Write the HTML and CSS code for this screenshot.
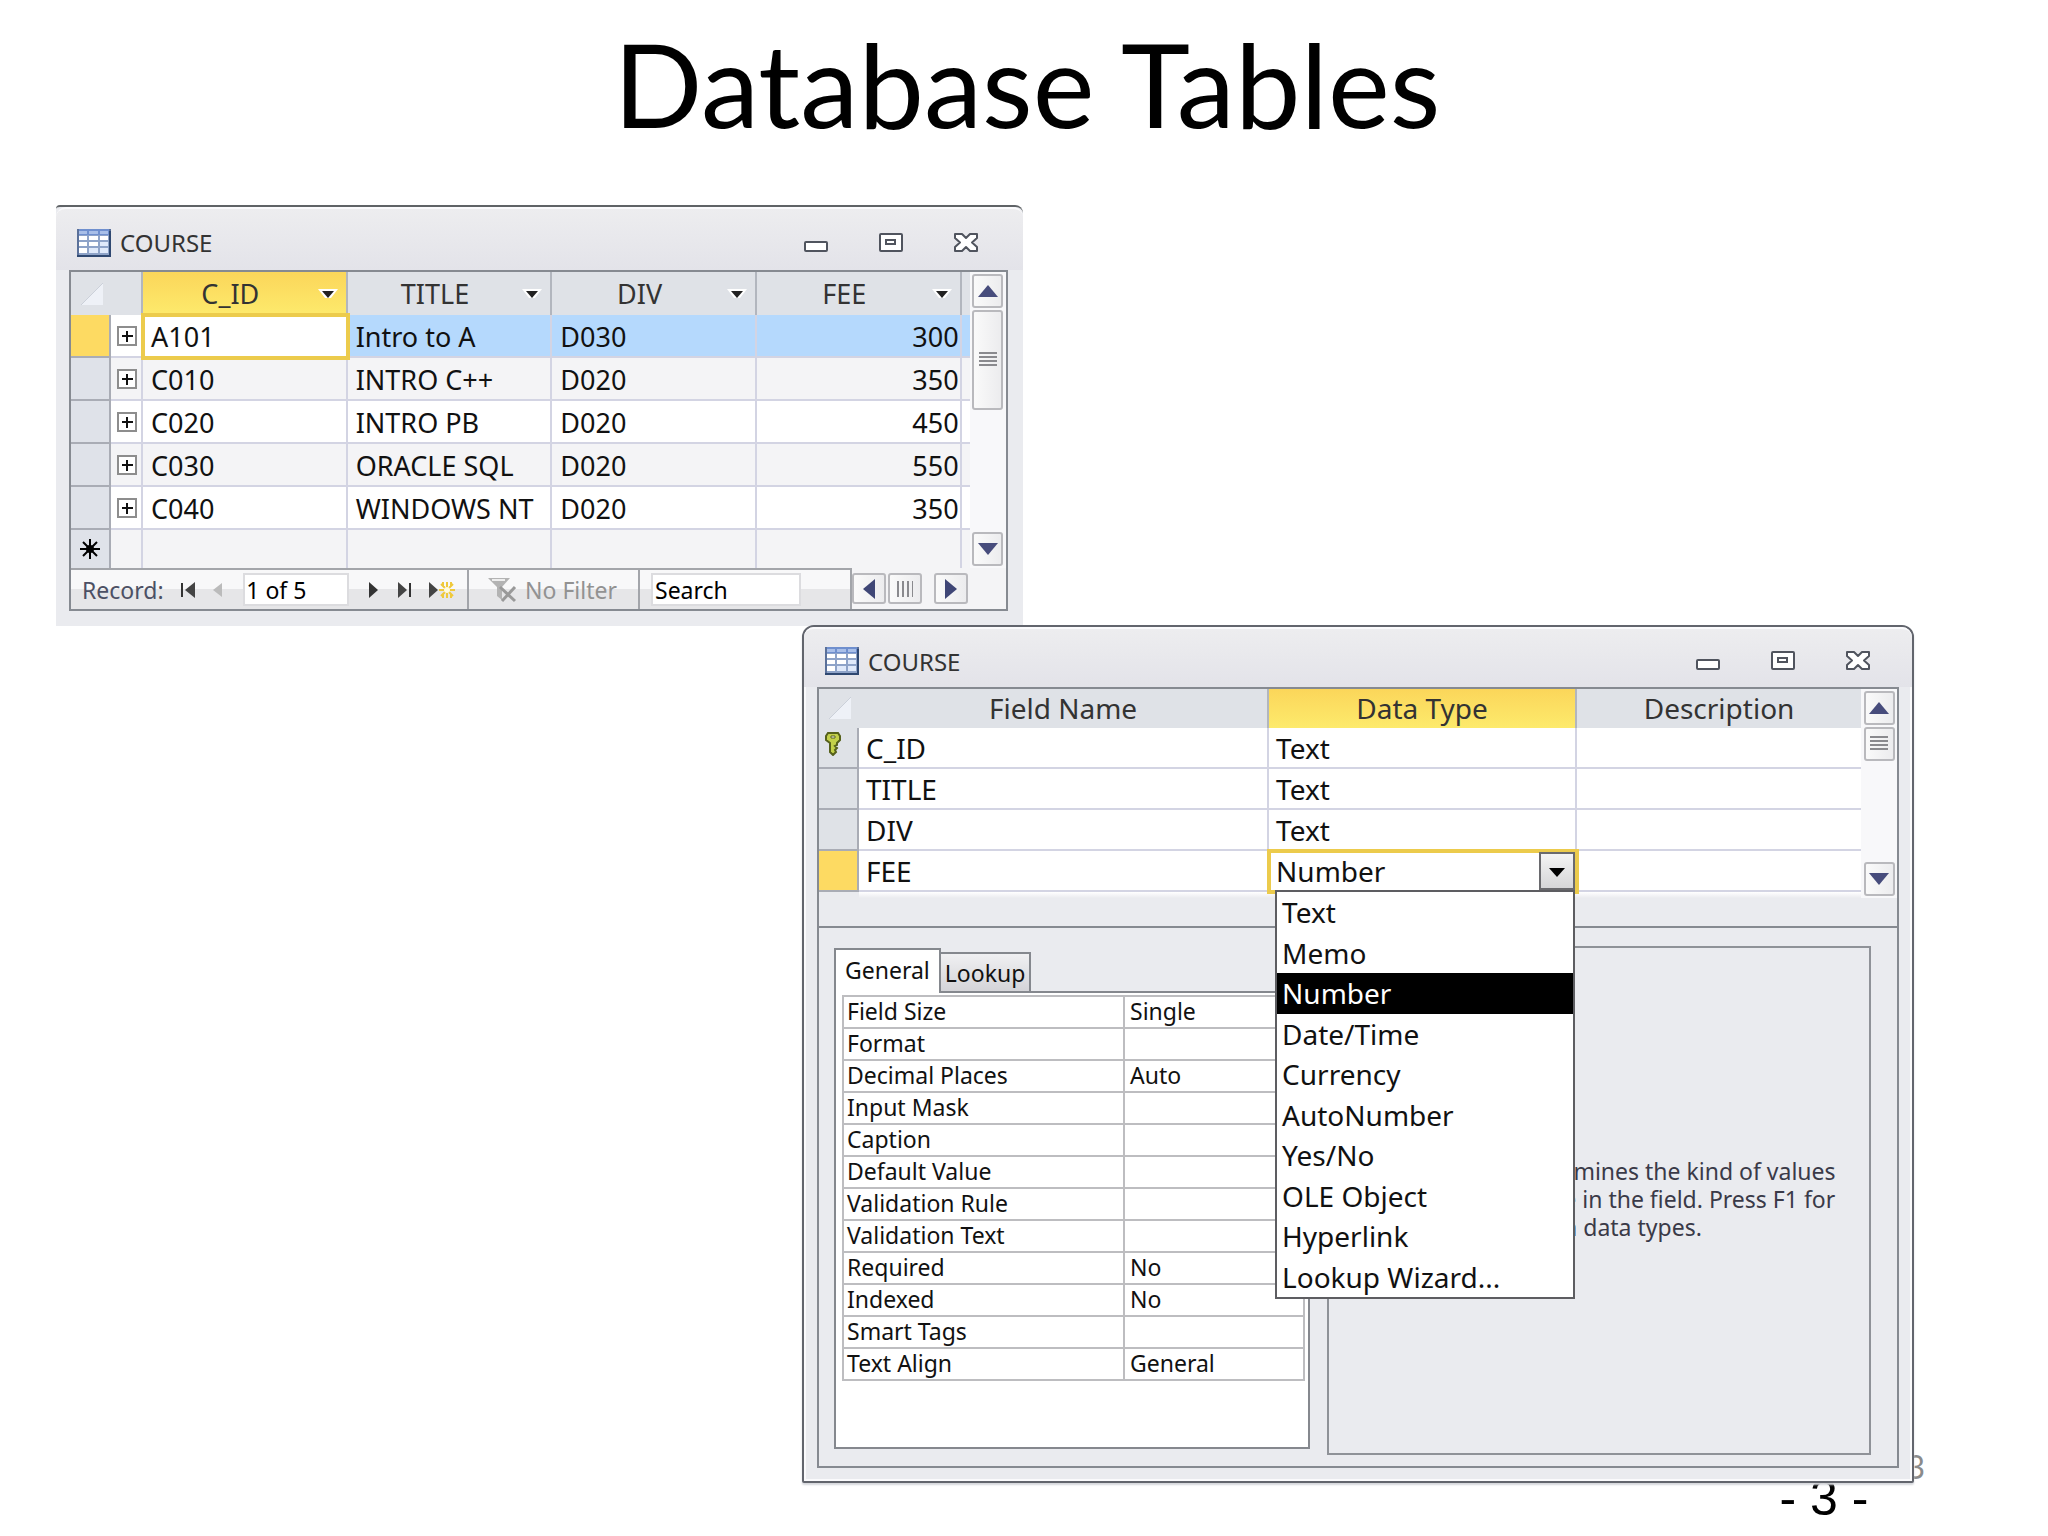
FILE: index.html
```html
<!DOCTYPE html>
<html lang="en">
<head>
  <meta charset="UTF-8">
  <title>Database Tables</title>
  <link rel="stylesheet" href="styles.css">
</head>
<body>

<!-- shared icons -->
<svg class="sprite" aria-hidden="true">
  <symbol id="icon-table" viewBox="0 0 34 28">
    <rect width="34" height="28" fill="#8ea3c8"/>
    <rect width="34" height="6" fill="#6f8fce"/>
    <path d="M2 2h8v3H2zM12 2h9v3h-9zM23 2h8v3h-8z" fill="#a9bfe8"/>
    <path d="M2 7h8v4H2zM12 7h9v4h-9zM23 7h8v4h-8zM2 13h8v4H2zM12 13h9v4h-9zM2 19h8v5H2z" fill="#fff"/>
    <path d="M23 13h8v4h-8zM12 19h9v5h-9zM23 19h8v5h-8z" fill="#dfe9fa"/>
    <path d="M1 0v27h32V0" fill="none" stroke="#5a7099" stroke-width="2"/>
    <path d="M0 27h33V2" fill="none" stroke="#2f4871" stroke-width="2"/>
  </symbol>
  <symbol id="icon-min" viewBox="0 0 24 20">
    <rect x="1" y="9" width="22" height="9" rx="1" fill="#fff" stroke="#50545e" stroke-width="2"/>
  </symbol>
  <symbol id="icon-max" viewBox="0 0 24 20">
    <rect x="1" y="1" width="22" height="17" rx="1" fill="#fff" stroke="#50545e" stroke-width="2"/>
    <rect x="7" y="7" width="9" height="4" fill="#fff" stroke="#50545e" stroke-width="2"/>
  </symbol>
  <symbol id="icon-close" viewBox="0 0 24 20">
    <path d="M1 1h7l4 4 4-4h7v4l-5 4.500 5 4.500v4h-7l-4-4-4 4H1v-4l5-4.500L1 5z" fill="#fff" stroke="#50545e" stroke-width="2" stroke-linejoin="round"/>
  </symbol>
  <symbol id="icon-corner" viewBox="0 0 24 24">
    <path d="M23 1v22H1z" fill="#eef1f7"/>
    <path d="M23 1L1 23" stroke="#cbd0d9" stroke-width="1"/>
  </symbol>
  <symbol id="icon-drop" viewBox="0 0 20 12">
    <path d="M0 1h20l-7 9H7z" fill="#fff"/>
    <path d="M4 3h12l-6 7z" fill="#222"/>
  </symbol>
  <symbol id="icon-up" viewBox="0 0 20 12"><path d="M0 12L10 0l10 12z" fill="#474c7c"/></symbol>
  <symbol id="icon-down" viewBox="0 0 20 12"><path d="M0 0h20L10 12z" fill="#474c7c"/></symbol>
  <symbol id="icon-left" viewBox="0 0 12 20"><path d="M12 0v20L0 10z" fill="#3f4676"/></symbol>
  <symbol id="icon-right" viewBox="0 0 12 20"><path d="M0 0v20l12-10z" fill="#3f4676"/></symbol>
  <symbol id="icon-plus" viewBox="0 0 20 20">
    <rect x="1" y="1" width="18" height="18" fill="#fff" stroke="#8d8d8d" stroke-width="2"/>
    <path d="M5 10h11M10 5v11" stroke="#111" stroke-width="2"/>
  </symbol>
</svg>

<div class="slide">
  <h1>Database Tables</h1>

  <div class="desktop">

    <!-- DATASHEET VIEW -->
    <section class="window datasheet">
      <header class="titlebar">
        <svg class="table-icon"><use href="#icon-table"/></svg>
        <h2>COURSE</h2>
        <button aria-label="Minimize"><svg><use href="#icon-min"/></svg></button>
        <button aria-label="Restore"><svg><use href="#icon-max"/></svg></button>
        <button aria-label="Close"><svg><use href="#icon-close"/></svg></button>
      </header>

      <div class="frame">
        <div class="sheet">
          <table class="grid">
            <colgroup>
              <col class="col-selector"><col class="col-expand"><col><col><col><col><col class="col-tail">
            </colgroup>
            <thead>
              <tr>
                <th colspan="2" class="corner"><svg><use href="#icon-corner"/></svg></th>
                <th class="active"><div>C_ID<button aria-label="Sort C_ID"><svg><use href="#icon-drop"/></svg></button></div></th>
                <th><div>TITLE<button aria-label="Sort TITLE"><svg><use href="#icon-drop"/></svg></button></div></th>
                <th><div>DIV<button aria-label="Sort DIV"><svg><use href="#icon-drop"/></svg></button></div></th>
                <th><div>FEE<button aria-label="Sort FEE"><svg><use href="#icon-drop"/></svg></button></div></th>
                <th></th>
              </tr>
            </thead>
            <tbody>
              <tr class="current">
                <td class="selector"></td>
                <td class="expand"><button aria-label="Expand A101"><svg><use href="#icon-plus"/></svg></button></td>
                <td class="focus">A101</td><td>Intro to A</td><td>D030</td><td class="num">300</td><td></td>
              </tr>
              <tr>
                <td class="selector"></td>
                <td class="expand"><button aria-label="Expand C010"><svg><use href="#icon-plus"/></svg></button></td>
                <td>C010</td><td>INTRO C++</td><td>D020</td><td class="num">350</td><td></td>
              </tr>
              <tr>
                <td class="selector"></td>
                <td class="expand"><button aria-label="Expand C020"><svg><use href="#icon-plus"/></svg></button></td>
                <td>C020</td><td>INTRO PB</td><td>D020</td><td class="num">450</td><td></td>
              </tr>
              <tr>
                <td class="selector"></td>
                <td class="expand"><button aria-label="Expand C030"><svg><use href="#icon-plus"/></svg></button></td>
                <td>C030</td><td>ORACLE SQL</td><td>D020</td><td class="num">550</td><td></td>
              </tr>
              <tr>
                <td class="selector"></td>
                <td class="expand"><button aria-label="Expand C040"><svg><use href="#icon-plus"/></svg></button></td>
                <td>C040</td><td>WINDOWS NT</td><td>D020</td><td class="num">350</td><td></td>
              </tr>
              <tr class="new-row">
                <td class="selector">
                  <svg class="star" viewBox="0 0 20 20"><path d="M10 0v20M0 10h20M3 3l14 14M17 3L3 17" stroke="#000" stroke-width="2"/><circle cx="10" cy="10" r="4"/></svg>
                </td>
                <td></td><td></td><td></td><td></td><td></td><td></td>
              </tr>
            </tbody>
          </table>

          <div class="vscroll">
            <button aria-label="Scroll up"><svg class="arrow-v"><use href="#icon-up"/></svg></button>
            <div class="thumb"><span class="grip"></span></div>
            <button class="last" aria-label="Scroll down"><svg class="arrow-v"><use href="#icon-down"/></svg></button>
          </div>
        </div>

        <div class="navbar">
          <div class="nav-group records">
            <label for="record">Record:</label>
            <button aria-label="First record"><svg width="14" height="16"><path d="M1 1v14" stroke="#333" stroke-width="2"/><path d="M14 0v16L4 8z" fill="#444"/></svg></button>
            <button aria-label="Previous record"><svg width="14" height="16"><path d="M10 1v14L1 8z" fill="#bbb"/></svg></button>
            <input type="text" id="record" value="1 of 5">
            <button aria-label="Next record"><svg width="14" height="16"><path d="M2 0v16l9-8z" fill="#333"/></svg></button>
            <button aria-label="Last record"><svg width="14" height="16"><path d="M0 0v16l9-8z" fill="#444"/><path d="M12 1v14" stroke="#333" stroke-width="2"/></svg></button>
            <button aria-label="New record"><svg width="26" height="18"><path d="M0 1v16l9-8z" fill="#444"/><path d="M18 1v16M10 9h16M12 3l12 12M24 3L12 15M14 1v4M22 1v4M14 13v4M22 13v4" stroke="#efc93c" stroke-width="2"/><circle cx="18" cy="9" r="3" fill="#fffbe0"/></svg></button>
          </div>
          <button class="nav-group filter" disabled>
            <svg width="30" height="26"><path d="M1 1h22l-8 9v13l-5-4v-9z" fill="#b3b3b3"/><path d="M5 3h13" stroke="#eee" stroke-width="2"/><path d="M13 10l15 14M28 10L15 24" stroke="#999" stroke-width="3"/></svg>
            No Filter
          </button>
          <div class="nav-group search">
            <input type="text" aria-label="Search" value="Search">
          </div>
          <div class="hscroll">
            <button aria-label="Scroll left"><svg class="arrow-h"><use href="#icon-left"/></svg></button>
            <div class="thumb-h"><span class="grip-h"></span></div>
            <button class="last" aria-label="Scroll right"><svg class="arrow-h"><use href="#icon-right"/></svg></button>
          </div>
        </div>
      </div>
    </section>

    <!-- DESIGN VIEW -->
    <section class="window design">
      <header class="titlebar">
        <svg class="table-icon"><use href="#icon-table"/></svg>
        <h2>COURSE</h2>
        <button aria-label="Minimize"><svg><use href="#icon-min"/></svg></button>
        <button aria-label="Restore"><svg><use href="#icon-max"/></svg></button>
        <button aria-label="Close"><svg><use href="#icon-close"/></svg></button>
      </header>

      <div class="frame">
        <div class="fields">
          <div class="fields-main">
            <table class="grid">
              <colgroup>
                <col class="col-selector"><col><col class="col-type"><col class="col-desc">
              </colgroup>
              <thead>
                <tr>
                  <th class="corner"><svg><use href="#icon-corner"/></svg></th>
                  <th>Field Name</th><th class="active">Data Type</th><th>Description</th>
                </tr>
              </thead>
              <tbody>
                <tr>
                  <td class="selector key">
                    <svg width="16" height="24" viewBox="0 0 16 24"><path d="M3 1h10l2 3v4l-3 3v2l-2 1 2 2-2 2 1 2-3 3-3-3V11L1 8V4z" fill="#c3d04a" stroke="#56611c" stroke-width="2"/><path d="M6 4h4v2H6z" fill="#fff" stroke="#56611c"/></svg>
                  </td>
                  <td>C_ID</td><td>Text</td><td></td>
                </tr>
                <tr><td class="selector"></td><td>TITLE</td><td>Text</td><td></td></tr>
                <tr><td class="selector"></td><td>DIV</td><td>Text</td><td></td></tr>
                <tr class="current">
                  <td class="selector"></td><td>FEE</td>
                  <td class="focus combo">
                    <select aria-label="Data type of FEE">
                      <option>Text</option><option>Memo</option><option selected>Number</option><option>Date/Time</option><option>Currency</option>
                      <option>AutoNumber</option><option>Yes/No</option><option>OLE Object</option><option>Hyperlink</option><option>Lookup Wizard...</option>
                    </select>
                    <span class="combo-arrow"></span>
                    <ul class="menu" role="listbox" aria-label="Data types">
                      <li role="option">Text</li>
                      <li role="option">Memo</li>
                      <li role="option" aria-selected="true">Number</li>
                      <li role="option">Date/Time</li>
                      <li role="option">Currency</li>
                      <li role="option">AutoNumber</li>
                      <li role="option">Yes/No</li>
                      <li role="option">OLE Object</li>
                      <li role="option">Hyperlink</li>
                      <li role="option">Lookup Wizard...</li>
                    </ul>
                  </td>
                  <td></td>
                </tr>
              </tbody>
            </table>
            <div class="fade"></div>
          </div>
          <div class="vscroll">
            <button aria-label="Scroll up"><svg class="arrow-v"><use href="#icon-up"/></svg></button>
            <div class="thumb"><span class="grip"></span></div>
            <button class="last" aria-label="Scroll down"><svg class="arrow-v"><use href="#icon-down"/></svg></button>
          </div>
        </div>

        <div class="properties">
          <div class="tabs">
            <div class="tab-row" role="tablist">
              <button class="tab selected" role="tab" aria-selected="true">General</button>
              <button class="tab" role="tab">Lookup</button>
            </div>
            <div class="tab-panel">
              <table class="props">
                <tr><th>Field Size</th><td>Single</td></tr>
                <tr><th>Format</th><td></td></tr>
                <tr><th>Decimal Places</th><td>Auto</td></tr>
                <tr><th>Input Mask</th><td></td></tr>
                <tr><th>Caption</th><td></td></tr>
                <tr><th>Default Value</th><td></td></tr>
                <tr><th>Validation Rule</th><td></td></tr>
                <tr><th>Validation Text</th><td></td></tr>
                <tr><th>Required</th><td>No</td></tr>
                <tr><th>Indexed</th><td>No</td></tr>
                <tr><th>Smart Tags</th><td></td></tr>
                <tr><th>Text Align</th><td>General</td></tr>
              </table>
            </div>
          </div>
          <div class="help">
            <p>The data type determines the kind of values<br>that users can store in the field. Press F1 for<br>help on data types.</p>
          </div>
        </div>
      </div>
    </section>

  </div>

  <footer>
    <span class="page">- 3 -</span>
    <span class="number">3</span>
  </footer>
</div>

</body>
</html>
```
FILE: styles.css
```css
* {
  box-sizing: border-box;
}
body {
  margin: 0;
  background: #fff;
  color: #111;
  font-family: "Noto Sans", "Open Sans", sans-serif;
}
button, input, select {
  font: inherit;
  color: inherit;
  margin: 0;
  padding: 0;
  border: 0;
  border-radius: 0;
  background: none;
}
svg {
  display: block;
}
.sprite {
  position: absolute;
  width: 0;
  height: 0;
}
.slide {
  min-height: 100vh;
  display: flex;
  flex-direction: column;
}
h1 {
  margin: 0;
  height: 180px;
  padding-left: 6px;
  line-height: 166px;
  font-family: Lato, sans-serif;
  font-size: 117px;
  font-weight: 400;
  color: #000;
  text-align: center;
}
.desktop {
  position: relative;
  flex: 1;
}

/* windows */
.window {
  position: absolute;
  z-index: 1;
  background: #eaebef;
}
.datasheet {
  left: 56px;
  top: 25px;
  width: 47.2%;
  padding: 0 15px 15px 13px;
  border-top: 2px solid #5f6366;
  border-radius: 4px 8px 0 0;
  font-size: 27px;
}
.design {
  left: 802px;
  top: 445px;
  width: 54.3%;
  padding: 0 13px 13px;
  border: 2px solid #62656d;
  border-radius: 12px 12px 2px 2px;
  box-shadow: inset 0 0 0 2px #fafafc, 0 2px 2px #d5d7dc;
  font-size: 28px;
}
.titlebar {
  display: flex;
  align-items: center;
  gap: 51px;
  height: 60px;
  margin: 0 -13px;
  padding: 6px 42px 0 21px;
  border-radius: 10px 10px 0 0;
  border-top: 2px solid #fafafc;
  background: linear-gradient(#ededef, #e3e3e9);
}
.datasheet .titlebar {
  height: 63px;
  margin-right: -15px;
  padding-right: 45px;
}
.titlebar h2 {
  flex: 1;
  margin: 0 0 0 -42px;
  font-size: 24px;
  font-weight: 400;
  color: #333;
}
.table-icon {
  width: 34px;
  height: 28px;
}
.titlebar button svg {
  width: 24px;
  height: 20px;
}
.frame {
  border: 2px solid #868a91;
  background: #eaebef;
}

/* record and field grids */
.sheet, .fields {
  display: flex;
}
.grid {
  flex: 1;
  width: 100%;
  table-layout: fixed;
  border-collapse: separate;
  border-spacing: 0;
}
.grid th {
  height: 43px;
  padding: 0;
  font-weight: 400;
  line-height: 36px;
  color: #333;
  background: #dfe2e7;
  border-right: 2px solid #b2b6be;
}
.grid td {
  height: 43px;
  padding: 2px 0 0 8px;
  line-height: 36px;
  white-space: nowrap;
  background: #fff;
  border-right: 2px solid #d3d4e3;
  border-bottom: 2px solid #d3d4e3;
}
.grid th.active {
  background: linear-gradient(#fbd65a, #fdea6c);
}
.datasheet tbody tr:nth-child(even) td {
  background: #f4f4f6;
}
.grid td.selector {
  padding: 0;
  background: #dfe2e9;
  border-color: #a9acb5;
}
.datasheet tbody tr:nth-child(even) td.selector {
  background: #dfe2e9;
}
.grid .current td {
  background: #b5d9fd;
}
.grid .current td.selector {
  background: #fdda62;
}
.grid .current td.expand, .grid .current td.focus {
  background: #fff;
}
.grid td.focus {
  position: relative;
  outline: 4px solid #eccb4c;
  outline-offset: -2px;
}
.grid td.num {
  padding-right: 1px;
  text-align: right;
}
.grid td.expand {
  padding: 0 0 0 6px;
}
.expand svg {
  width: 20px;
  height: 20px;
}
.grid .new-row td {
  height: 38px;
  padding: 0;
  border-bottom: 0;
}
.star {
  width: 20px;
  height: 20px;
  margin: 0 auto;
}
.col-selector { width: 40px; }
.col-expand { width: 32px; }
.col-tail { width: 8px; }
.grid th:last-child, .grid td:last-child {
  border-right: 0;
}
th.corner svg {
  width: 24px;
  height: 24px;
  margin-left: 9px;
}
.grid th div {
  display: flex;
  align-items: center;
}
.grid th div button {
  margin-left: auto;
  margin-right: 8px;
}
.grid th div::before {
  content: "";
  margin-left: auto;
}
th div svg {
  width: 20px;
  height: 12px;
}

/* scroll bars */
.vscroll {
  display: flex;
  flex-direction: column;
  align-items: center;
  gap: 2px;
  width: 36px;
  padding: 2px 0;
  background: #f8f8fa;
}
.vscroll button, .thumb, .hscroll button, .thumb-h {
  display: flex;
  align-items: center;
  justify-content: center;
  width: 31px;
  height: 34px;
  border: 2px solid #b9b9bd;
  border-radius: 3px;
  background: linear-gradient(90deg, #fafafa, #ececee);
}
.datasheet .thumb {
  height: 100px;
}
.vscroll .last {
  margin-top: auto;
}
.arrow-v {
  width: 20px;
  height: 12px;
}
.arrow-h {
  width: 12px;
  height: 20px;
}
.grip {
  width: 18px;
  height: 16px;
  background: repeating-linear-gradient(#8a8a8e 0 2px, transparent 2px 4px);
}
.grip-h {
  width: 16px;
  height: 16px;
  background: repeating-linear-gradient(90deg, #8a8a8e 0 2px, transparent 2px 5px);
}

/* record navigation */
.navbar {
  display: flex;
  height: 41px;
  font-size: 23px;
  background: #f4f4f6;
}
.nav-group {
  display: flex;
  align-items: center;
  border-top: 2px solid #a3a5aa;
  border-right: 2px solid #a3a5aa;
  background: linear-gradient(#f8f8f9 50%, #e6e6e8 50%);
}
.navbar input {
  height: 33px;
  padding: 0 2px;
  background: #fff;
  border: 2px solid #dcdcdf;
  color: #000;
}
.records {
  width: 398px;
  padding: 0 12px 0 11px;
  justify-content: space-between;
}
.records label {
  color: #4c5064;
}
.records input {
  width: 106px;
  padding: 0 1px;
}
.filter {
  width: 171px;
  gap: 8px;
  padding-left: 18px;
  color: #929292;
}
.search {
  flex: 1;
  padding-left: 11px;
}
.search input {
  width: 150px;
}
.hscroll {
  display: flex;
  align-items: center;
  gap: 2px;
  width: 154px;
  padding: 0 38px 0 0;
}
.hscroll button, .thumb-h {
  width: 34px;
  height: 31px;
}
.hscroll .last {
  margin-left: auto;
}

/* design grid */
.fields {
  padding-bottom: 28px;
  border-bottom: 2px solid #868a91;
}
.fields-main {
  flex: 1;
}
.design .grid th {
  height: 39px;
  padding-bottom: 1px;
}
.design .grid td {
  height: 41px;
  padding: 0 0 0 7px;
}
.design .grid tbody td {
  background: #fff;
}
.design .grid td.selector {
  padding: 0;
  background: #dfe2e7;
}
.design .grid .current td.selector {
  background: #fdda62;
}
.design .grid th.corner {
  border-right: 0;
}
.design .key svg {
  margin: -8px 0 0 6px;
}
.col-type { width: 308px; }
.col-desc { width: 284px; }
.fade {
  height: 6px;
  margin-left: 40px;
  background: linear-gradient(#fff, #eaebef);
}
.combo select {
  display: block;
  width: 100%;
  height: 36px;
  padding-right: 36px;
  appearance: none;
  outline: 0;
}
.combo-arrow {
  position: absolute;
  top: 1px;
  right: 0;
  width: 36px;
  height: 38px;
  border: 2px solid #6a6a6e;
  background: linear-gradient(#f4f4f4, #d6d6d8);
  pointer-events: none;
}
.combo-arrow::after {
  content: "";
  position: absolute;
  top: 14px;
  left: 8px;
  border: 8px solid transparent;
  border-top: 9px solid #000;
  border-bottom: 0;
}
.menu {
  position: absolute;
  z-index: 2;
  top: 100%;
  left: 6px;
  right: 0;
  display: grid;
  height: 409px;
  margin: 0;
  padding: 0;
  list-style: none;
  background: #fff;
  border: 2px solid #5d5d61;
}
.menu li {
  display: flex;
  align-items: center;
  padding-left: 5px;
}
.menu li[aria-selected="true"] {
  background: #000;
  color: #fff;
}

/* field properties */
.properties {
  display: flex;
  gap: 17px;
  padding: 18px 26px 11px 15px;
  font-size: 23px;
}
.tabs {
  flex: 478;
  padding: 2px 0 6px;
}
.tab-row {
  display: flex;
  align-items: flex-end;
  height: 43px;
}
.tab {
  height: 39px;
  padding: 0 4px;
  border: 2px solid #85888e;
  border-left: 0;
  border-bottom: 0;
  background: linear-gradient(#f0f0f2, #d4d4d8);
}
.tab.selected {
  position: relative;
  height: 45px;
  margin-bottom: -2px;
  padding: 0 9px 4px;
  border-left: 2px solid #85888e;
  background: #fff;
}
.tab-panel {
  height: 458px;
  padding: 2px 3px 0 6px;
  border: 2px solid #85888e;
  background: #fff;
}
.props {
  width: 100%;
  table-layout: fixed;
  border-collapse: collapse;
}
.props th, .props td {
  height: 32px;
  padding: 0 0 2px 5px;
  border: 2px solid #bdbdc0;
  font-weight: 400;
  line-height: 28px;
  text-align: left;
}
.props th {
  width: 61%;
  padding-left: 3px;
}
.help {
  flex: 543;
  display: flex;
  align-items: center;
  justify-content: center;
  padding-bottom: 4px;
  border: 2px solid #8f9298;
  color: #3a3a48;
  line-height: 28px;
  text-align: center;
}
.help p {
  margin: 0;
}

/* page numbers */
footer {
  display: flex;
  align-items: flex-end;
  justify-content: flex-end;
  gap: 38px;
  height: 86px;
  padding: 0 123px 13px 0;
  color: #000;
}
.page {
  font-family: "Liberation Sans", Arial, sans-serif;
  font-size: 50px;
  line-height: 50px;
}
.number {
  align-self: flex-start;
  font-family: Lato, sans-serif;
  font-size: 32px;
  line-height: 34px;
  color: #8b8b8b;
}
```
